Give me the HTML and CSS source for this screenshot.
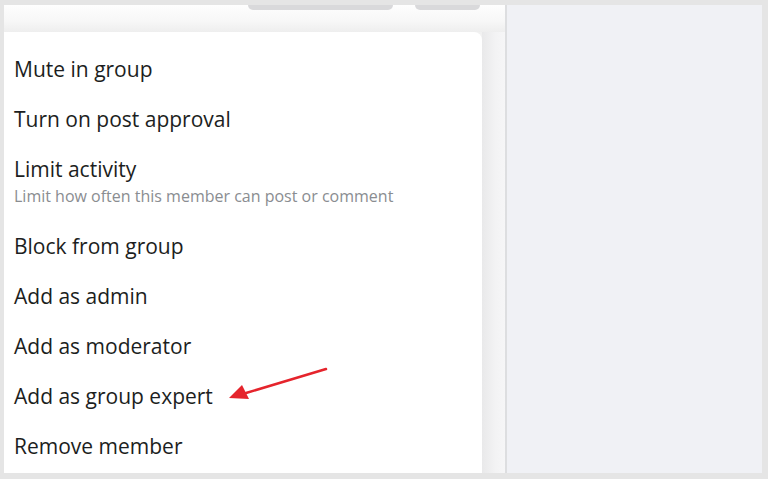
FILE: index.html
```html
<!DOCTYPE html>
<html lang="en">
<head>
  <meta charset="UTF-8" />
  <title>Member options</title>
  <link rel="stylesheet" href="styles.css">
</head>
<body>
  <div class="frame">
    <div class="left">
      <div class="top">
        <span class="tab tab-wide"></span>
        <span class="tab tab-small"></span>
      </div>
      <div class="body">
        <div class="menu">
          <div class="item">Mute in group</div>
          <div class="item">Turn on post approval</div>
          <div class="item item-sub">
            Limit activity
            <span class="sub">Limit how often this member can post or comment</span>
          </div>
          <div class="item">Block from group</div>
          <div class="item">Add as admin</div>
          <div class="item">Add as moderator</div>
          <div class="item">Add as group expert</div>
          <div class="item">Remove member</div>

          <!-- annotation arrow -->
          <svg class="arrow" width="110" height="40" viewBox="0 0 110 40">
            <path d="M100 4 L20 28" stroke="#e5242c" stroke-width="2.5" stroke-linecap="round" fill="none"/>
            <path d="M3 33 L16 20 L23 34 Z" fill="#e5242c"/>
          </svg>
        </div>
        <div class="shade"></div>
      </div>
    </div>
    <div class="side"></div>
  </div>
</body>
</html>
```

FILE: styles.css
```css
html, body {
  margin: 0;
  padding: 0;
}

body {
  font-family: "Open Sans", "Noto Sans", sans-serif;
  background: #e5e5e5;
}

.frame {
  display: flex;
  height: 479px;
  box-sizing: border-box;
  padding: 5px 6px 6px 4px;
}

.left {
  width: 501px;
  display: flex;
  flex-direction: column;
  border-right: 2px solid #dddee0;
}

.top {
  flex-shrink: 0;
  height: 27px;
  background: linear-gradient(#fefefe, #f7f7f7 60%, #eeeeee);
  display: flex;
  align-items: flex-start;
  padding-left: 244px;
  gap: 22px;
}

.tab {
  height: 5px;
  background: #d9d9db;
  border-radius: 0 0 6px 6px;
}

.tab-wide { width: 145px; }
.tab-small { width: 65px; }

.body {
  flex: 1;
  min-height: 0;
  display: flex;
  background: #f1f1f1;
}

.menu {
  position: relative;
  width: 478px;
  background: #fff;
  border-radius: 0 8px 0 0;
  padding-top: 20px;
  box-sizing: border-box;
  overflow: hidden;
}

.shade {
  flex: 1;
  background: linear-gradient(90deg, #e9e9ea, #f3f3f4 60%, #f6f6f7);
}

.item {
  padding: 0 10px;
  height: 50px;
  font-size: 21px;
  line-height: 34px;
  color: #1c1e21;
}

.item-sub {
  height: 77px;
}

.item:last-of-type {
  height: 34px;
}

.sub {
  display: block;
  font-size: 16px;
  line-height: 20px;
  color: #8a8d91;
}

.arrow {
  position: absolute;
  left: 222px;
  top: 333px;
}

.side {
  flex: 1;
  background: #f0f1f5;
}
```
